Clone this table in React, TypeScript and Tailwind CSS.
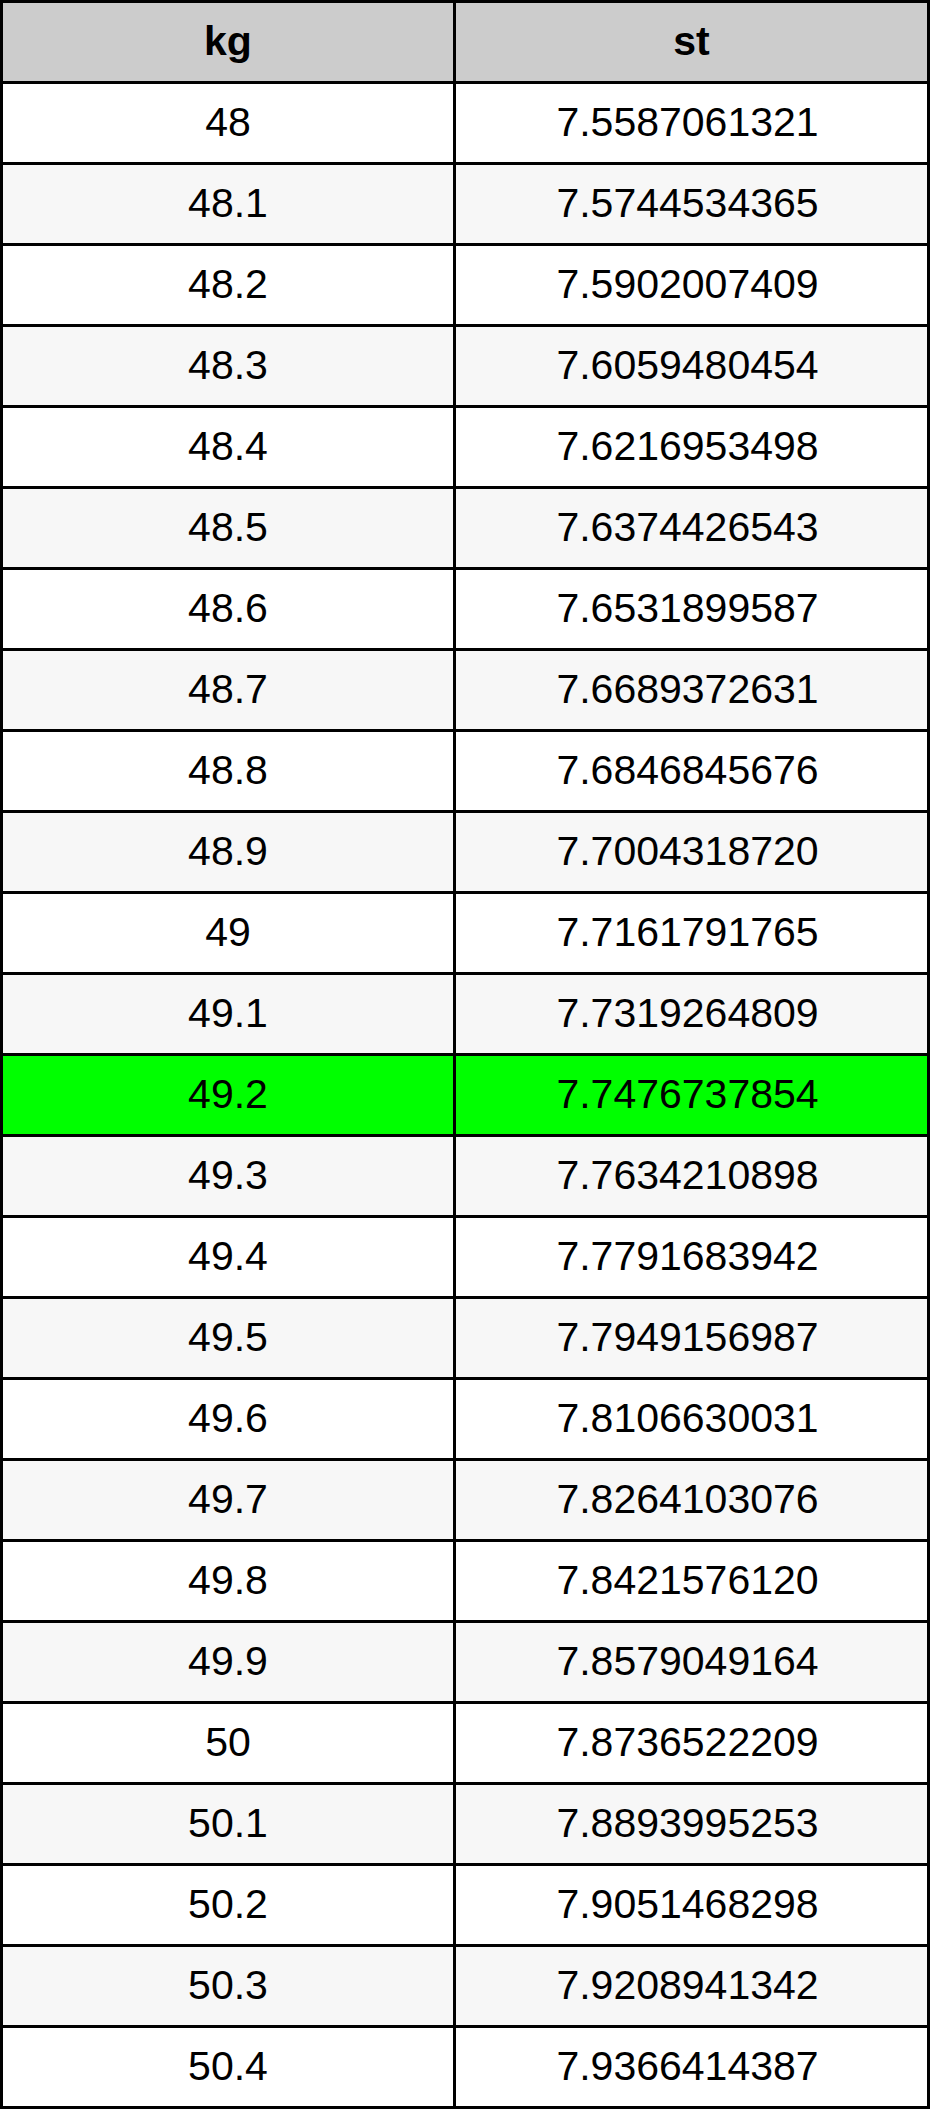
const rows: [string, string][] = [
  ["48", "7.5587061321"],
  ["48.1", "7.5744534365"],
  ["48.2", "7.5902007409"],
  ["48.3", "7.6059480454"],
  ["48.4", "7.6216953498"],
  ["48.5", "7.6374426543"],
  ["48.6", "7.6531899587"],
  ["48.7", "7.6689372631"],
  ["48.8", "7.6846845676"],
  ["48.9", "7.7004318720"],
  ["49", "7.7161791765"],
  ["49.1", "7.7319264809"],
  ["49.2", "7.7476737854"],
  ["49.3", "7.7634210898"],
  ["49.4", "7.7791683942"],
  ["49.5", "7.7949156987"],
  ["49.6", "7.8106630031"],
  ["49.7", "7.8264103076"],
  ["49.8", "7.8421576120"],
  ["49.9", "7.8579049164"],
  ["50", "7.8736522209"],
  ["50.1", "7.8893995253"],
  ["50.2", "7.9051468298"],
  ["50.3", "7.9208941342"],
  ["50.4", "7.9366414387"],
];

const HIGHLIGHT = "49.2";

export default function App() {
  return (
    <div className="w-[930px] bg-white font-['Liberation_Sans',Arial,sans-serif] text-[41px] text-black">
      <div className="grid grid-cols-[450px_471px] gap-[3px] bg-black p-[3px]">
        {/* header */}
        <div className="flex h-[78px] items-center justify-center bg-[#cccccc] font-bold">kg</div>
        <div className="flex h-[78px] items-center justify-center bg-[#cccccc] font-bold">st</div>

        {rows.map(([kg, st], i) => {
          const bg =
            kg === HIGHLIGHT ? "bg-[#00ff00]" : i % 2 === 1 ? "bg-[#f7f7f7]" : "bg-white";
          return [
            <div key={kg + "-kg"} className={`flex h-[78px] items-center justify-center ${bg}`}>
              {kg}
            </div>,
            <div key={kg + "-st"} className={`flex h-[78px] items-center justify-center pr-[8px] ${bg}`}>
              {st}
            </div>,
          ];
        })}
      </div>
    </div>
  );
}
